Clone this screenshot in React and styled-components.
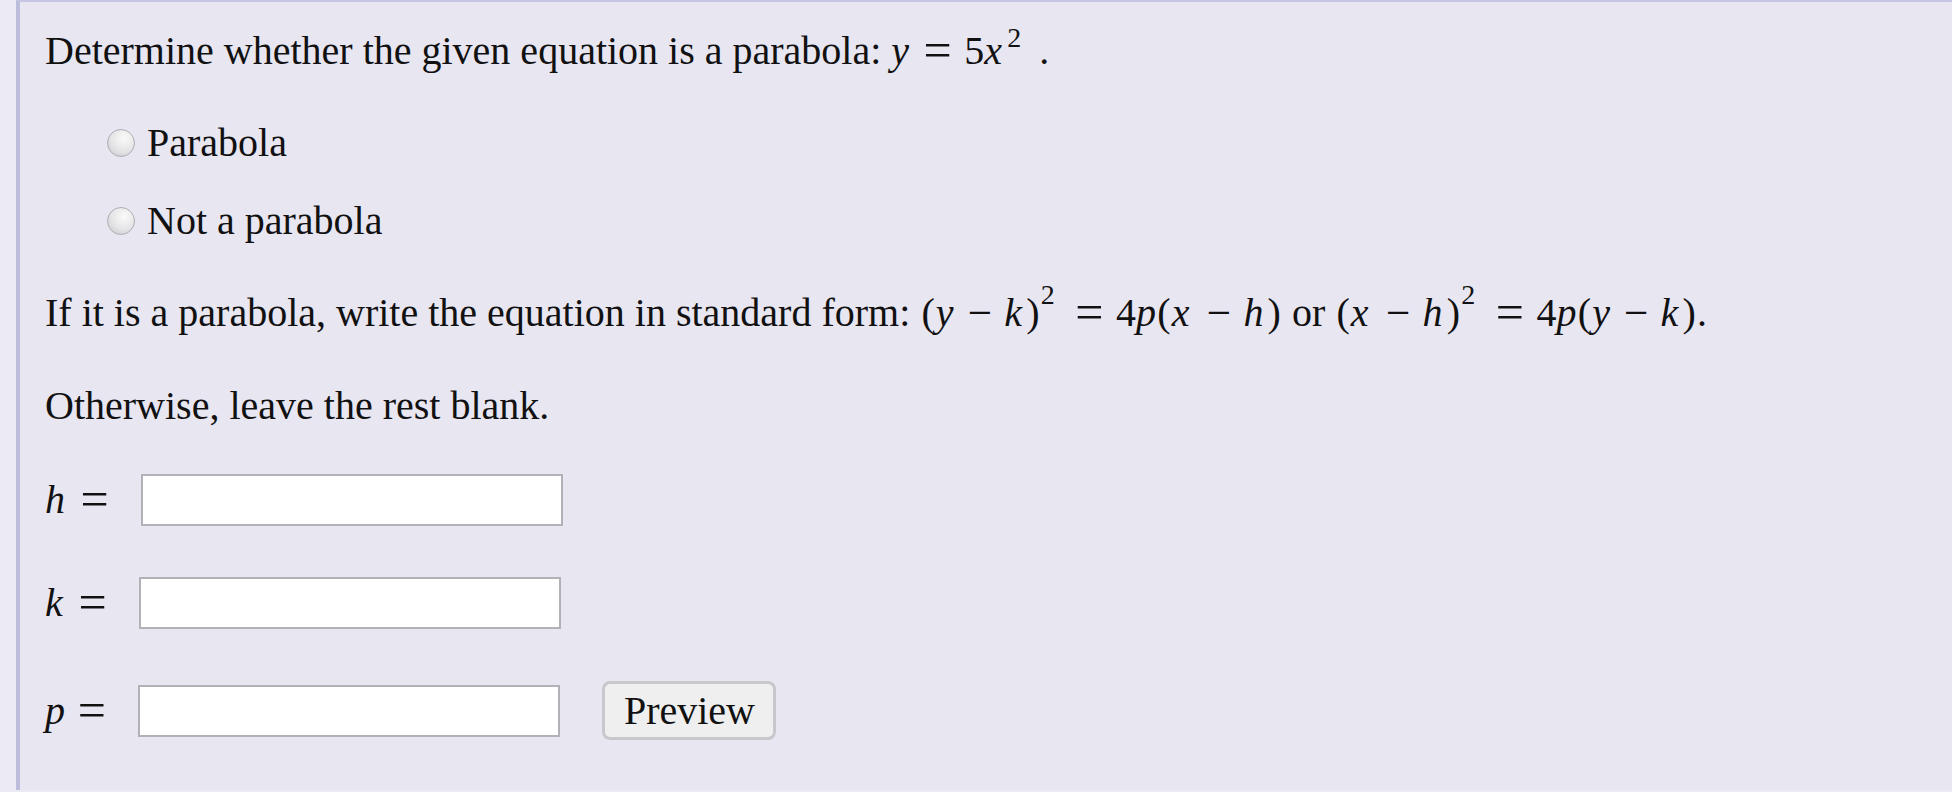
import React from "react";
import styled, { createGlobalStyle } from "styled-components";

const GlobalStyle = createGlobalStyle`
  html, body {
    margin: 0;
    padding: 0;
    background: #eceaf4;
  }
  body {
    font-family: "Liberation Serif", "Times New Roman", serif;
    color: #111;
  }
`;

const Panel = styled.div`
  margin-left: 16px;
  min-height: 790px;
  box-sizing: border-box;
  border-left: 4px solid #bcbcdd;
  border-top: 2px solid #c6c6e4;
  background: #e8e6f1;
  padding: 26px 0 0 25px;
  font-size: 40px;
  line-height: 46px;
  display: flex;
  flex-direction: column;
`;

const Text = styled.div`
  margin-top: ${({ $top }) => $top || 0}px;
  white-space: nowrap;
`;

const Options = styled.div`
  margin-top: ${({ $top }) => $top}px;
  padding-left: 62px;
  display: flex;
  flex-direction: column;
  gap: 32px;
`;

const Option = styled.label`
  display: flex;
  align-items: center;
  gap: 12px;
  height: 46px;
`;

const Radio = styled.input.attrs({ type: "radio" })`
  appearance: none;
  margin: 0;
  width: 28px;
  height: 28px;
  border-radius: 50%;
  border: 1.5px solid #aeaeb4;
  background: radial-gradient(circle at 62% 32%, #fafafa 0%, #e4e4e6 55%, #c6c6ca 100%);
  box-sizing: border-box;
`;

const Row = styled.div`
  margin-top: ${({ $top }) => $top}px;
  display: flex;
  align-items: center;
`;

const Label = styled.span`
  display: inline-flex;
  margin-right: 20px;
  white-space: nowrap;
`;

const Field = styled.input.attrs({ type: "text" })`
  width: 422px;
  height: 52px;
  box-sizing: border-box;
  border: 2px solid #b1b1b8;
  background: #fff;
  margin: 0;
  font-size: 36px;
  font-family: "Liberation Serif", serif;
`;

const Button = styled.button`
  margin-left: 42px;
  width: 174px;
  height: 59px;
  box-sizing: border-box;
  border: 3px solid #c8c8cc;
  border-radius: 8px;
  background: #efefef;
  font-family: "Liberation Serif", "Times New Roman", serif;
  font-size: 40px;
  color: #111;
  padding: 0;
`;

const Math = styled.span`
  font-family: "Liberation Serif", "Times New Roman", serif;
  white-space: nowrap;
`;

const Var = styled.span`
  display: inline-block;
  font-style: italic;
  width: ${({ $w }) => $w}em;
`;

const Sym = styled.span`
  display: inline-block;
  text-align: center;
  width: ${({ $w }) => $w || 0.389}em;
  margin: 0 ${({ $space }) => $space || 0}em;
`;

const Glyph = styled.span`
  font-size: ${({ $scale }) => $scale}em;
  line-height: 0;
  vertical-align: ${({ $drop }) => -$drop}px;
  font-weight: 300;
`;

const Sup = styled.span`
  display: inline-block;
  font-size: 28px;
  line-height: 0;
  vertical-align: ${({ $raise }) => $raise}px;
  margin-right: 8px;
`;

const W = { x: 0.572, y: 0.49, k: 0.521, h: 0.576, p: 0.503 };

const V = ({ n }) => <Var $w={W[n]}>{n}</Var>;

const Minus = () => (
  <Sym $w={0.778} $space={0.222}>
    <Glyph $scale={1.08} $drop={1}>−</Glyph>
  </Sym>
);

const Eq = () => (
  <Sym $w={0.778} $space={0.278}>
    <Glyph $scale={1.25} $drop={3}>=</Glyph>
  </Sym>
);

const Paren = ({ c }) => <Sym>{c}</Sym>;

const Square = ({ a, b }) => (
  <>
    <Paren c="(" />
    <V n={a} />
    <Minus />
    <V n={b} />
    <Paren c=")" />
    <Sup $raise={22}>2</Sup>
  </>
);

const FourP = ({ a, b }) => (
  <>
    <Sym $w={0.5}>4</Sym>
    <V n="p" />
    <Paren c="(" />
    <V n={a} />
    <Minus />
    <V n={b} />
    <Paren c=")" />
  </>
);

const Input = ({ name, top, children }) => (
  <Row $top={top}>
    <Label>
      <Math>
        <V n={name} />
        <Eq />
      </Math>
    </Label>
    <Field aria-label={name} />
    {children}
  </Row>
);

export default function App() {
  return (
    <>
      <GlobalStyle />
      <Panel>
        <Text>
          Determine whether the given equation is a parabola:{" "}
          <Math>
            <V n="y" />
            <Eq />
            <Sym $w={0.5}>5</Sym>
            <V n="x" />
            <Sup $raise={17}>2</Sup>
          </Math>{" "}
          .
        </Text>

        <Options $top={46}>
          <Option>
            <Radio name="kind" />
            Parabola
          </Option>
          <Option>
            <Radio name="kind" />
            Not a parabola
          </Option>
        </Options>

        <Text $top={46}>
          If it is a parabola, write the equation in standard form:{" "}
          <Math>
            <Square a="y" b="k" />
            <Eq />
            <FourP a="x" b="h" />
          </Math>{" "}
          or{" "}
          <Math>
            <Square a="x" b="h" />
            <Eq />
            <FourP a="y" b="k" />
          </Math>
          .
        </Text>

        <Text $top={47}>Otherwise, leave the rest blank.</Text>

        <Input name="h" top={45} />
        <Input name="k" top={51} />
        <Input name="p" top={52}>
          <Button>Preview</Button>
        </Input>
      </Panel>
    </>
  );
}
